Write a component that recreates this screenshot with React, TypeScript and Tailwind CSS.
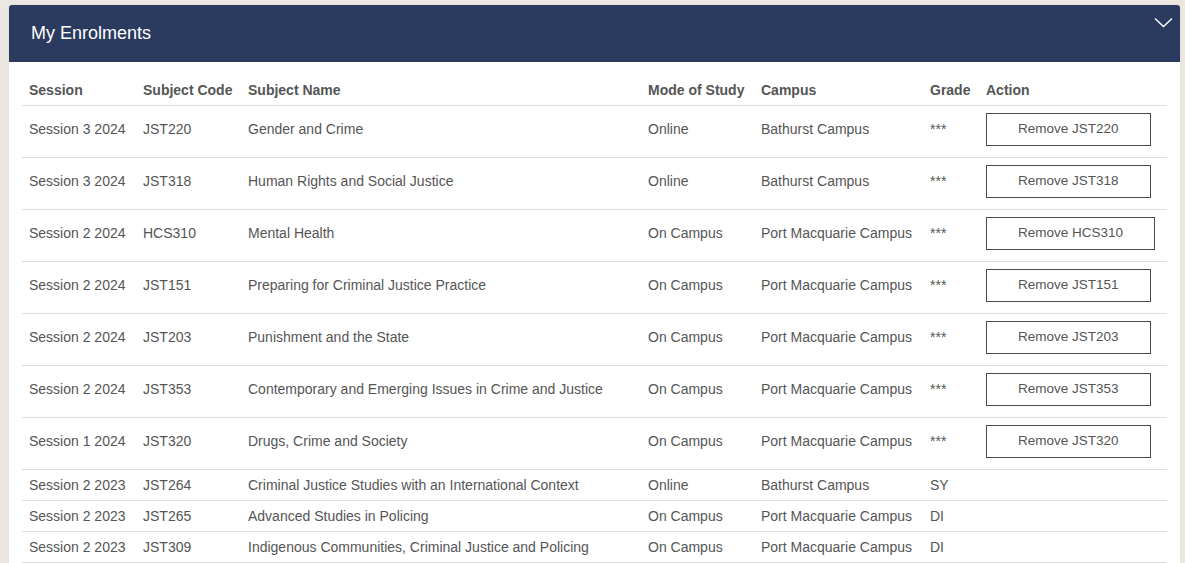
const rows = [
  { session: "Session 3 2024", code: "JST220", name: "Gender and Crime", mode: "Online", campus: "Bathurst Campus", grade: "***", removable: true },
  { session: "Session 3 2024", code: "JST318", name: "Human Rights and Social Justice", mode: "Online", campus: "Bathurst Campus", grade: "***", removable: true },
  { session: "Session 2 2024", code: "HCS310", name: "Mental Health", mode: "On Campus", campus: "Port Macquarie Campus", grade: "***", removable: true },
  { session: "Session 2 2024", code: "JST151", name: "Preparing for Criminal Justice Practice", mode: "On Campus", campus: "Port Macquarie Campus", grade: "***", removable: true },
  { session: "Session 2 2024", code: "JST203", name: "Punishment and the State", mode: "On Campus", campus: "Port Macquarie Campus", grade: "***", removable: true },
  { session: "Session 2 2024", code: "JST353", name: "Contemporary and Emerging Issues in Crime and Justice", mode: "On Campus", campus: "Port Macquarie Campus", grade: "***", removable: true },
  { session: "Session 1 2024", code: "JST320", name: "Drugs, Crime and Society", mode: "On Campus", campus: "Port Macquarie Campus", grade: "***", removable: true },
  { session: "Session 2 2023", code: "JST264", name: "Criminal Justice Studies with an International Context", mode: "Online", campus: "Bathurst Campus", grade: "SY", removable: false },
  { session: "Session 2 2023", code: "JST265", name: "Advanced Studies in Policing", mode: "On Campus", campus: "Port Macquarie Campus", grade: "DI", removable: false },
  { session: "Session 2 2023", code: "JST309", name: "Indigenous Communities, Criminal Justice and Policing", mode: "On Campus", campus: "Port Macquarie Campus", grade: "DI", removable: false },
];

const headers = ["Session", "Subject Code", "Subject Name", "Mode of Study", "Campus", "Grade", "Action"];

export default function App() {
  return (
    <main
      className="min-h-screen bg-[#ece7e0] pl-[9px] pr-[5px] pt-[5px]"
      style={{ fontFamily: '"Liberation Sans", Arial, sans-serif' }}
    >
      <div className="bg-white rounded-t-[3px] shadow-[0_0_2px_rgba(0,0,0,0.08)] pb-6">
        <div className="relative h-[57px] bg-[#2b3a5f] rounded-t-[3px] flex items-center pl-[22px]">
          <h1 className="text-white text-[18px] leading-none -mt-[2px]">My Enrolments</h1>
          <svg
            className="absolute right-[7px] top-[12px]"
            width="19"
            height="11"
            viewBox="0 0 19 11"
            fill="none"
          >
            <path d="M1 1.5l8.5 8 8.5-8" stroke="white" strokeWidth="1.4" />
          </svg>
        </div>

        <div className="px-[13px] pt-[13px]">
          <table className="w-full table-fixed border-collapse text-[14px] text-[#555]">
            <colgroup>
              <col className="w-[114px]" />
              <col className="w-[105px]" />
              <col className="w-[400px]" />
              <col className="w-[113px]" />
              <col className="w-[169px]" />
              <col className="w-[56px]" />
              <col className="w-[188px]" />
            </colgroup>
            <thead>
              <tr className="border-b border-[#dddddd]">
                {headers.map((h) => (
                  <th key={h} className="text-left font-bold px-[7px] h-[30px] pt-[2px] align-middle whitespace-nowrap">
                    {h}
                  </th>
                ))}
              </tr>
            </thead>
            <tbody>
              {rows.map((r) => {
                const cell = "px-[7px] whitespace-nowrap align-middle " + (r.removable ? "pb-[3px]" : "pt-[2px]");
                return (
                  <tr key={r.code} className="border-b border-[#dddddd]">
                    <td className={cell + (r.removable ? " h-[52px]" : " h-[31px]")}>{r.session}</td>
                    <td className={cell}>{r.code}</td>
                    <td className={cell}>{r.name}</td>
                    <td className={cell}>{r.mode}</td>
                    <td className={cell}>{r.campus}</td>
                    <td className={cell}>{r.grade}</td>
                    <td className={cell}>
                      {r.removable && (
                        <button
                          type="button"
                          className="h-[33px] px-[31px] border border-[#4a4a4a] bg-white text-[13.5px] text-[#555]"
                        >
                          Remove {r.code}
                        </button>
                      )}
                    </td>
                  </tr>
                );
              })}
            </tbody>
          </table>
        </div>
      </div>
    </main>
  );
}
